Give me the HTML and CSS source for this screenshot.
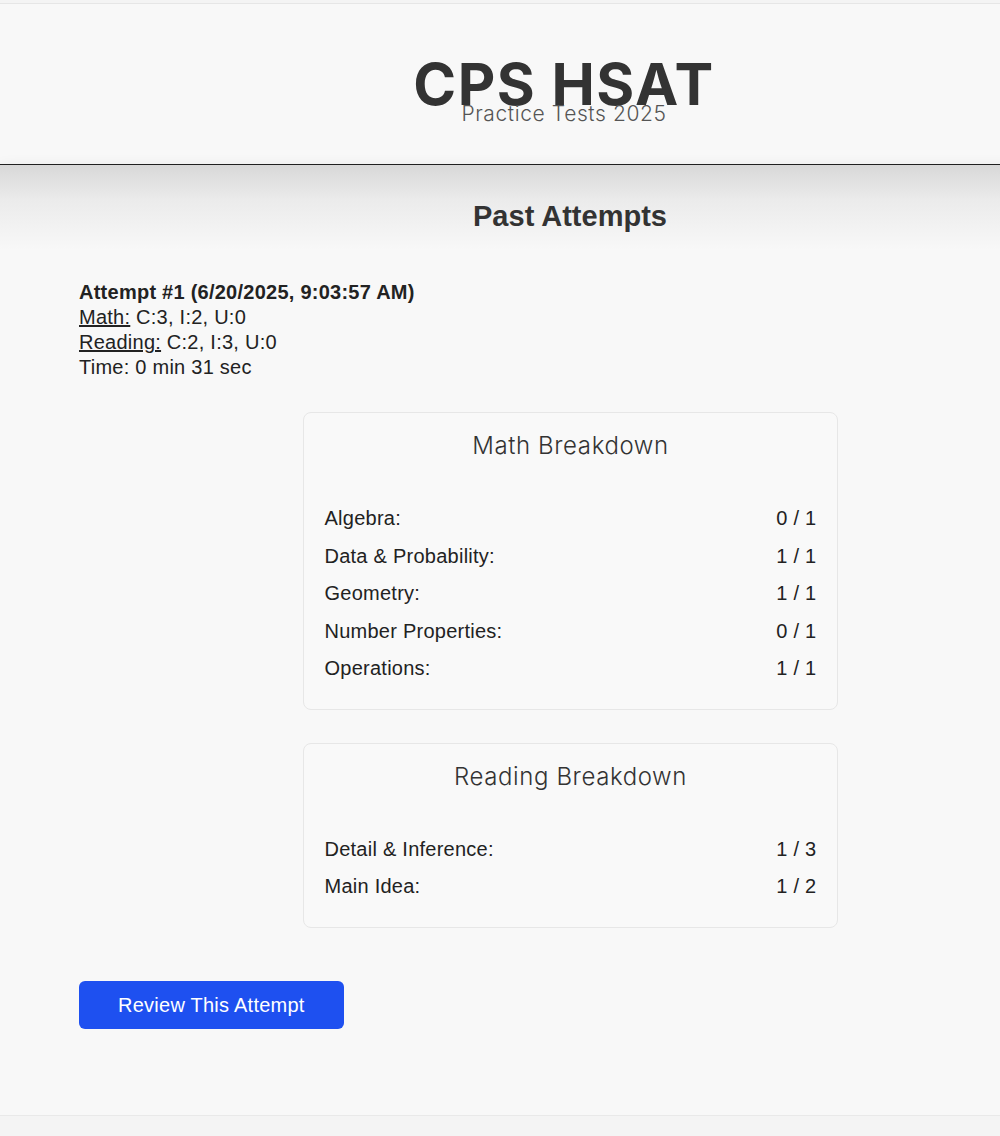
FILE: index.html
```html
<!DOCTYPE html>
<html lang="en">
<head>
    <meta charset="UTF-8">
    <meta name="viewport" content="width=device-width, initial-scale=1.0">
    <title>CPS HSAT Practice Tests 2025</title>
    <link rel="stylesheet" href="styles.css">
</head>
<body>
    <header class="site-header">
        <h1 class="site-title">CPS HSAT</h1>
        <p class="site-subtitle">Practice Tests 2025</p>
    </header>

    <main class="history">
        <h2 class="history-title">Past Attempts</h2>

        <div class="attempt">
            <div class="attempt-summary">
                <strong>Attempt #1 (6/20/2025, 9:03:57 AM)</strong><br>
                <u>Math:</u> C:3, I:2, U:0<br>
                <u>Reading:</u> C:2, I:3, U:0<br>
                Time: 0 min 31 sec
            </div>

            <div class="breakdown">
                <h3 class="breakdown-title">Math Breakdown</h3>
                <div class="breakdown-row"><span>Algebra:</span><span>0 / 1</span></div>
                <div class="breakdown-row"><span>Data &amp; Probability:</span><span>1 / 1</span></div>
                <div class="breakdown-row"><span>Geometry:</span><span>1 / 1</span></div>
                <div class="breakdown-row"><span>Number Properties:</span><span>0 / 1</span></div>
                <div class="breakdown-row"><span>Operations:</span><span>1 / 1</span></div>
            </div>

            <div class="breakdown">
                <h3 class="breakdown-title">Reading Breakdown</h3>
                <div class="breakdown-row"><span>Detail &amp; Inference:</span><span>1 / 3</span></div>
                <div class="breakdown-row"><span>Main Idea:</span><span>1 / 2</span></div>
            </div>

            <button class="review-btn">Review This Attempt</button>
        </div>
    </main>
</body>
</html>
```

FILE: styles.css
```css
* {
    box-sizing: border-box;
}

html, body {
    overflow-x: hidden;
}

body {
    margin: 0;
    background: #f4f4f4;
    color: #222;
    font-family: "Liberation Sans", Arial, sans-serif;
    letter-spacing: 0.25px;
}

/* Header */
.site-header {
    width: 1128px;
    margin-top: 3px;
    padding: 51px 0 38px;
    background: #f8f8f8;
    border-top: 1px solid #e6e6e6;
    border-bottom: 1px solid #222;
    text-align: center;
}

.site-title {
    margin: 0;
    font-family: Inter, sans-serif;
    font-size: 58px;
    font-weight: 700;
    line-height: 58px;
    letter-spacing: 1.5px;
    color: #333;
}

.site-subtitle {
    margin: -11px 0 0;
    font-family: Inter, sans-serif;
    font-size: 21px;
    font-weight: 300;
    line-height: 24px;
    letter-spacing: 0.6px;
    color: #555;
}

/* Attempts list */
.history {
    width: 1140px;
    padding: 34px 79px 86px;
    background: linear-gradient(#d8d8d8, #ebebeb 35px, #f8f8f8 85px);
    border-bottom: 1px solid #e9e9e9;
    box-shadow: 0 5px 16px rgba(0, 0, 0, 0.12);
}

.history-title {
    margin: 0 0 47px;
    font-size: 29px;
    line-height: 34px;
    letter-spacing: 0;
    text-align: center;
    color: #333;
}

.attempt-summary {
    font-size: 20px;
    line-height: 25px;
    margin-bottom: 32px;
}

.breakdown {
    width: 535px;
    margin: 0 auto 33px;
    padding: 18px 20px 21px 21px;
    background: #f9f9f9;
    border: 1px solid #e7e7e7;
    border-radius: 8px;
}

.breakdown-title {
    margin: 0 0 39px;
    font-family: Inter, sans-serif;
    font-size: 24px;
    font-weight: 300;
    line-height: 30px;
    letter-spacing: 0.6px;
    text-align: center;
    color: #333;
}

.breakdown-row {
    display: flex;
    justify-content: space-between;
    padding: 7px 0;
    font-size: 20px;
    line-height: 23.5px;
}

.review-btn {
    margin-top: 20px;
    padding: 12px 39px;
    background: #1e50f0;
    color: white;
    font-family: inherit;
    font-size: 20px;
    line-height: 24px;
    letter-spacing: 0.25px;
    border: none;
    border-radius: 6px;
    cursor: pointer;
}

.review-btn:hover {
    background: #1a44d0;
}
```
